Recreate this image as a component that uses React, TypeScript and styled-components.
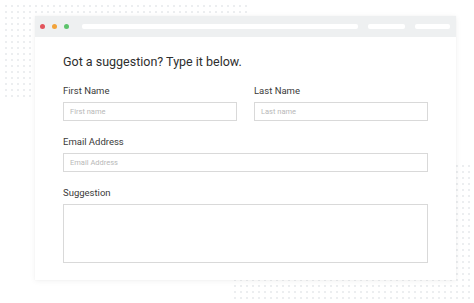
import React from "react";
import styled, { createGlobalStyle } from "styled-components";

const Global = createGlobalStyle`
  html, body { margin: 0; padding: 0; background: #ffffff; }
  body { font-family: Roboto, "Liberation Sans", Arial, sans-serif; }
  * { box-sizing: border-box; }
`;

const Stage = styled.div`
  position: relative;
  width: 474px;
  height: 303px;
  overflow: hidden;
  padding: 16px 0 0 35px;
`;

const Dots = styled.div<{ $x: number; $y: number; $w: number; $h: number }>`
  position: absolute;
  left: ${(p) => p.$x}px;
  top: ${(p) => p.$y}px;
  width: ${(p) => p.$w}px;
  height: ${(p) => p.$h}px;
  background-image: radial-gradient(circle, #eceef0 0.9px, transparent 1.2px);
  background-size: 6px 6px;
  z-index: 0;
`;

const Window = styled.div`
  position: relative;
  z-index: 1;
  width: 421px;
  height: 264px;
  background: #ffffff;
  box-shadow: 0 1px 6px rgba(0, 0, 0, 0.06), 0 0 1px rgba(0, 0, 0, 0.05);
  display: flex;
  flex-direction: column;
`;

const TitleBar = styled.div`
  height: 21px;
  background: #eef0f1;
  display: flex;
  align-items: center;
  padding: 0 6px 0 5px;
  gap: 4px;
`;

const Light = styled.span<{ $c: string }>`
  width: 5px;
  height: 5px;
  border-radius: 50%;
  background: ${(p) => p.$c};
  margin-right: 3px;
`;

const Bar = styled.span<{ $w?: number; $grow?: boolean }>`
  height: 5px;
  border-radius: 2px;
  background: #ffffff;
  ${(p) => (p.$grow ? "flex: 1;" : `width: ${p.$w}px;`)}
  margin-left: 6px;
`;

const Body = styled.div`
  flex: 1;
  padding: 17px 28px 0 28px;
  display: flex;
  flex-direction: column;
`;

const Heading = styled.h1`
  margin: 0 0 15px 0;
  font-size: 12.5px;
  line-height: 16px;
  font-weight: 400;
  color: #2e2e2e;
`;

const Row = styled.div`
  display: grid;
  grid-template-columns: 1fr 1fr;
  column-gap: 17px;
`;

const Field = styled.div`
  display: flex;
  flex-direction: column;
  margin-bottom: 15px;
`;

const Label = styled.label`
  font-size: 9.5px;
  line-height: 12px;
  color: #3a3a3a;
  margin-bottom: 5px;
`;

const Input = styled.div<{ $h?: number }>`
  height: ${(p) => p.$h ?? 19}px;
  border: 1px solid #d9d9d9;
  background: #fff;
  font-size: 7.5px;
  color: #b8b8b8;
  padding: 5px 6px;
  line-height: 8px;
`;

export default function App() {
  return (
    <>
      <Global />
      <Stage>
        <Dots $x={3} $y={3} $w={244} $h={98} />
        <Dots $x={232} $y={163} $w={242} $h={140} />
        <Window>
          <TitleBar>
            <Light $c="#e2545c" />
            <Light $c="#f2a33a" />
            <Light $c="#5cc36b" />
            <Bar $grow />
            <Bar $w={37} />
            <Bar $w={35} />
          </TitleBar>
          <Body>
            <Heading>Got a suggestion? Type it below.</Heading>
            <Row>
              <Field>
                <Label>First Name</Label>
                <Input>First name</Input>
              </Field>
              <Field>
                <Label>Last Name</Label>
                <Input>Last name</Input>
              </Field>
            </Row>
            <Field>
              <Label>Email Address</Label>
              <Input>Email Address</Input>
            </Field>
            <Field>
              <Label>Suggestion</Label>
              <Input $h={59} />
            </Field>
          </Body>
        </Window>
      </Stage>
    </>
  );
}
